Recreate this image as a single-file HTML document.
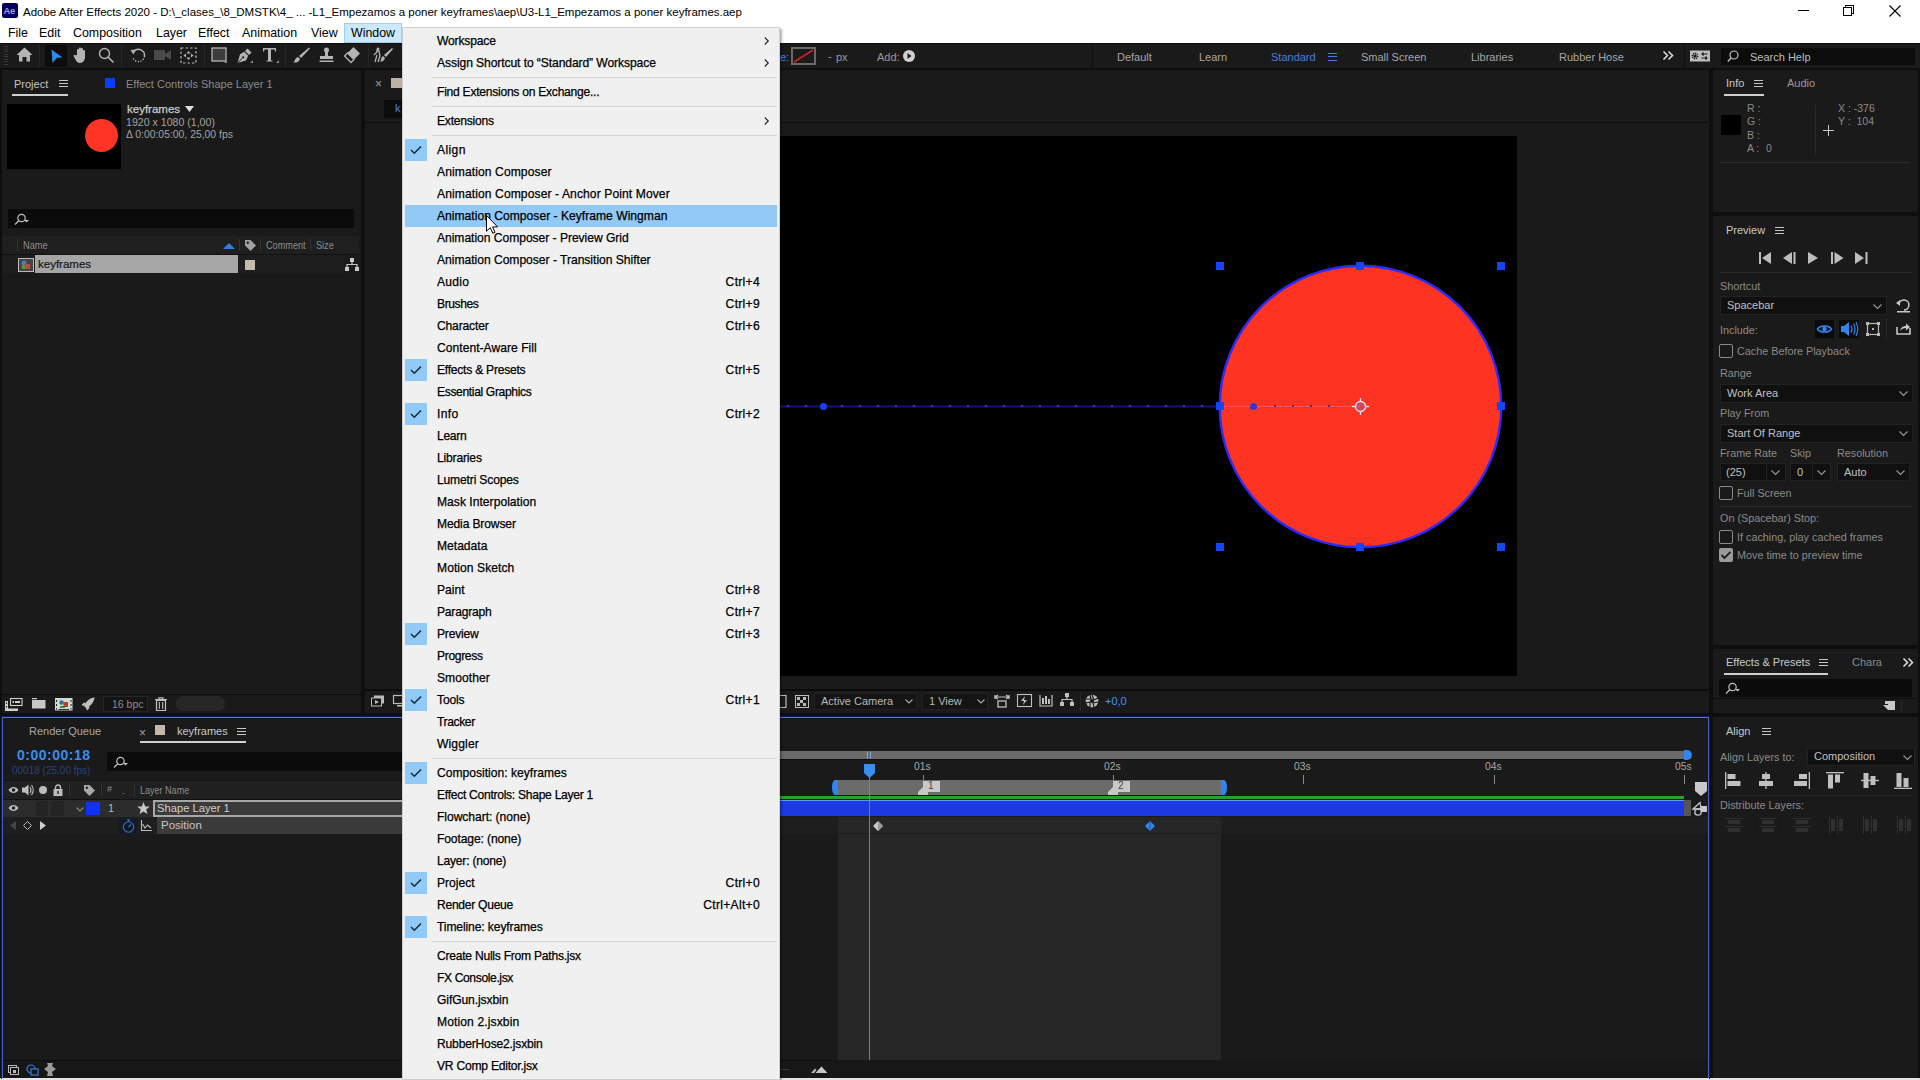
<!DOCTYPE html>
<html><head><meta charset="utf-8"><style>
*{margin:0;padding:0;box-sizing:border-box}
html,body{width:1920px;height:1080px;overflow:hidden;background:#0e0e0e;font-family:"Liberation Sans",sans-serif}
.a{position:absolute}
svg.a{overflow:visible}
.t{position:absolute;white-space:nowrap;line-height:1}
</style></head><body>
<div class="a" style="left:0px;top:0px;width:1920px;height:43px;background:#fff;"></div>
<div class="a" style="left:2px;top:3px;width:16px;height:15px;background:#00005b;border-radius:2px"></div>
<div class="t" style="left:3.5px;top:6px;font-size:9.5px;color:#9999ff;font-weight:bold;letter-spacing:-0.3px">Ae</div>
<div class="t" style="left:23px;top:7px;font-size:11.5px;color:#000;">Adobe After Effects 2020 - D:\_clases_\8_DMSTK\4_ ... -L1_Empezamos a poner keyframes\aep\U3-L1_Empezamos a poner keyframes.aep</div>
<div class="a" style="left:1798px;top:10px;width:11px;height:1px;background:#000;"></div>
<div class="a" style="left:1845px;top:5px;width:9px;height:9px;border:1px solid #000"></div>
<div class="a" style="left:1843px;top:7px;width:9px;height:9px;border:1px solid #000;background:#fff"></div>
<svg class="a" style="left:1889px;top:5px;" width="12" height="12" viewBox="0 0 12 12"><path d="M0.5 0.5L11.5 11.5M11.5 0.5L0.5 11.5" stroke="#000" stroke-width="1.1"/></svg>
<div class="a" style="left:344px;top:23px;width:58px;height:20px;background:#cce8ff;border:1px solid #99d1ff"></div>
<div class="t" style="left:8px;top:27px;font-size:12.4px;color:#000;">File</div>
<div class="t" style="left:39px;top:27px;font-size:12.4px;color:#000;">Edit</div>
<div class="t" style="left:73px;top:27px;font-size:12.4px;color:#000;">Composition</div>
<div class="t" style="left:156px;top:27px;font-size:12.4px;color:#000;">Layer</div>
<div class="t" style="left:198px;top:27px;font-size:12.4px;color:#000;">Effect</div>
<div class="t" style="left:242px;top:27px;font-size:12.4px;color:#000;">Animation</div>
<div class="t" style="left:311px;top:27px;font-size:12.4px;color:#000;">View</div>
<div class="t" style="left:351px;top:27px;font-size:12.4px;color:#000;">Window</div>
<div class="a" style="left:0px;top:43px;width:1920px;height:1035px;background:#0e0e0e;"></div>
<div class="a" style="left:0px;top:1078px;width:1920px;height:2px;background:#e6e6e6;"></div>
<div class="a" style="left:0px;top:44px;width:1920px;height:24px;background:#1a1a1a;"></div>
<div class="a" style="left:2px;top:70px;width:359px;height:643px;background:#1a1a1a;"></div>
<div class="a" style="left:365px;top:70px;width:1344px;height:643px;background:#1a1a1a;"></div>
<div class="a" style="left:1713px;top:70px;width:205px;height:142px;background:#1a1a1a;"></div>
<div class="a" style="left:1713px;top:216px;width:205px;height:429px;background:#1a1a1a;"></div>
<div class="a" style="left:1713px;top:649px;width:205px;height:64px;background:#1a1a1a;"></div>
<div class="a" style="left:1713px;top:717px;width:205px;height:361px;background:#1a1a1a;"></div>
<div class="a" style="left:2px;top:717px;width:1707px;height:361px;background:#1a1a1a;"></div>
<div class="a" style="left:4px;top:46.0px;width:4px;height:1px;background:#3a3a3a;"></div>
<div class="a" style="left:4px;top:48.5px;width:4px;height:1px;background:#3a3a3a;"></div>
<div class="a" style="left:4px;top:51.0px;width:4px;height:1px;background:#3a3a3a;"></div>
<div class="a" style="left:4px;top:53.5px;width:4px;height:1px;background:#3a3a3a;"></div>
<div class="a" style="left:4px;top:56.0px;width:4px;height:1px;background:#3a3a3a;"></div>
<div class="a" style="left:4px;top:58.5px;width:4px;height:1px;background:#3a3a3a;"></div>
<div class="a" style="left:4px;top:61.0px;width:4px;height:1px;background:#3a3a3a;"></div>
<div class="a" style="left:4px;top:63.5px;width:4px;height:1px;background:#3a3a3a;"></div>
<svg class="a" style="left:16px;top:47px;" width="17" height="15" viewBox="0 0 17 15"><path d="M8.5 0.5L16.5 8H14V14.5H10.5V10H6.5V14.5H3V8H0.5Z" fill="#b4b4b4"/></svg>
<div class="a" style="left:39px;top:45px;width:1px;height:22px;background:#262626;"></div>
<div class="a" style="left:45px;top:45px;width:22px;height:22px;background:#0c0c0c;"></div>
<svg class="a" style="left:51px;top:49px;" width="12" height="15" viewBox="0 0 12 15"><path d="M0.5 0.5L11.5 8.5L6 8.8L1.5 14Z" fill="#2d8ceb"/></svg>
<svg class="a" style="left:73px;top:47px;" width="16" height="17" viewBox="0 0 16 17"><path d="M4 8V3a1 1 0 0 1 2 0V7V1.5a1 1 0 0 1 2 0V7V2a1 1 0 0 1 2 0V7.5V4a1 1 0 0 1 2 0V10c0 3-2 6-5 6H6.5C5 16 4 15 3 13.5L0.8 9.5a1 1 0 0 1 1.6-1.2Z" fill="#b4b4b4"/></svg>
<svg class="a" style="left:98px;top:47px;" width="17" height="17" viewBox="0 0 17 17"><circle cx="6.5" cy="6.5" r="5" fill="none" stroke="#b4b4b4" stroke-width="1.4"/><path d="M10 10L15.5 15.5" stroke="#b4b4b4" stroke-width="1.6"/></svg>
<div class="a" style="left:121px;top:45px;width:1px;height:22px;background:#262626;"></div>
<svg class="a" style="left:130px;top:47px;" width="17" height="17" viewBox="0 0 17 17"><path d="M4 4.5A6 6 0 0 1 14.5 9" fill="none" stroke="#b4b4b4" stroke-width="1.5"/><path d="M14.5 9A6 6 0 0 1 3 11" fill="none" stroke="#b4b4b4" stroke-width="1.4" stroke-dasharray="1.3 1.5"/><path d="M0.5 3L6 2.5L3.5 7.5Z" fill="#b4b4b4"/></svg>
<svg class="a" style="left:154px;top:49px;" width="18" height="12" viewBox="0 0 18 12"><rect x="0" y="1" width="11" height="10" fill="#4a4a4a"/><path d="M11 5L17 1V11L11 7Z" fill="#4a4a4a"/></svg>
<svg class="a" style="left:180px;top:47px;" width="17" height="17" viewBox="0 0 17 17"><rect x="1" y="1" width="15" height="15" fill="none" stroke="#b4b4b4" stroke-width="1.2" stroke-dasharray="2.5 2"/><path d="M8.5 4L6.5 6.5H10.5Z M8.5 13L6.5 10.5H10.5Z M3.5 8.5L6 6.5V10.5Z M13.5 8.5L11 6.5V10.5Z" fill="#b4b4b4"/></svg>
<div class="a" style="left:204px;top:45px;width:1px;height:22px;background:#262626;"></div>
<svg class="a" style="left:211px;top:47px;" width="18" height="17" viewBox="0 0 18 17"><rect x="1" y="1" width="14" height="13" fill="#3c3c3c" stroke="#b4b4b4" stroke-width="1.3"/><path d="M16 16H13L16 13Z" fill="#888"/></svg>
<svg class="a" style="left:236px;top:47px;" width="18" height="17" viewBox="0 0 18 17"><path d="M11.5 1.5L15.5 5.5L13 8L9 4Z" fill="#b4b4b4"/><path d="M8.2 4.8L12.2 8.8L10 13.5L1.5 16L4 7.2Z" fill="#b4b4b4"/><path d="M1.8 15.7L6.5 11" stroke="#1a1a1a" stroke-width="1"/><circle cx="7.2" cy="10.3" r="1.1" fill="#1a1a1a"/><path d="M17 16H14L17 13Z" fill="#888"/></svg>
<svg class="a" style="left:262px;top:47px;" width="18" height="17" viewBox="0 0 18 17"><path d="M1 1H14V4.5H13L12.5 2.5H9V13.5H10.5V14.5H4.5V13.5H6V2.5H2.5L2 4.5H1Z" fill="#b4b4b4"/><path d="M17 16H14L17 13Z" fill="#888"/></svg>
<div class="a" style="left:285px;top:45px;width:1px;height:22px;background:#262626;"></div>
<svg class="a" style="left:293px;top:47px;" width="18" height="17" viewBox="0 0 18 17"><path d="M16 0.5L17 1.5L8 11L6 9Z" fill="#b4b4b4"/><path d="M5 10L7 12C6 15 3 16 0.5 15.5C2 14 2 11 5 10Z" fill="#b4b4b4"/></svg>
<svg class="a" style="left:318px;top:47px;" width="17" height="16" viewBox="0 0 17 16"><circle cx="8.5" cy="3" r="2.5" fill="#b4b4b4"/><path d="M7 5H10V9H15V12H2V9H7Z" fill="#b4b4b4"/><rect x="1.5" y="13.5" width="14" height="1.5" fill="#b4b4b4"/></svg>
<svg class="a" style="left:343px;top:46px;" width="18" height="17" viewBox="0 0 18 17"><path d="M10.5 1L17 7.5L11 13.5L4.5 7Z" fill="#b4b4b4"/><path d="M4.5 7L11 13.5L8 16.5L1.5 10Z" fill="none" stroke="#b4b4b4" stroke-width="1.3"/></svg>
<div class="a" style="left:368px;top:45px;width:1px;height:22px;background:#262626;"></div>
<svg class="a" style="left:373px;top:47px;" width="22" height="17" viewBox="0 0 22 17"><circle cx="5" cy="2" r="1.5" fill="#b4b4b4"/><path d="M3 4H6L7 9L5 15M4 8L2 15M4 5L1 8" fill="none" stroke="#b4b4b4" stroke-width="1.3"/><path d="M19 1L20 2L13 10L11 8Z" fill="#b4b4b4"/><path d="M10 9L12 11C11 14 9 15 7 14.5C8.5 13 8 10 10 9Z" fill="#b4b4b4"/></svg>
<div class="t" style="left:780px;top:52px;font-size:11px;color:#4a86e8;">e:</div>
<div class="a" style="left:791px;top:47px;width:25px;height:18px;background:#6a6a6a;"></div>
<div class="a" style="left:793px;top:49px;width:21px;height:14px;background:#1a1a1a;"></div>
<svg class="a" style="left:793px;top:49px;" width="21" height="14" viewBox="0 0 21 14"><path d="M1 13L20 1" stroke="#d42020" stroke-width="1.6"/></svg>
<div class="t" style="left:828px;top:51px;font-size:11px;color:#9a9a9a;">-</div>
<div class="t" style="left:836px;top:52px;font-size:11px;color:#9a9a9a;">px</div>
<div class="t" style="left:877px;top:52px;font-size:11px;color:#9a9a9a;">Add:</div>
<svg class="a" style="left:903px;top:50px;" width="12" height="12" viewBox="0 0 12 12"><circle cx="6" cy="6" r="6" fill="#d0d0d0"/><path d="M4.5 3L8.5 6L4.5 9Z" fill="#1b1b1b"/></svg>
<div class="a" style="left:1092px;top:44px;width:1px;height:24px;background:#111;"></div>
<div class="t" style="left:1117px;top:52px;font-size:11px;color:#a6a6a6;">Default</div>
<div class="t" style="left:1199px;top:52px;font-size:11px;color:#a6a6a6;">Learn</div>
<div class="t" style="left:1271px;top:52px;font-size:11px;color:#4a7cd6;">Standard</div>
<div class="a" style="left:1328px;top:52.5px;width:9px;height:1.3px;background:#4a7cd6;"></div>
<div class="a" style="left:1328px;top:56.0px;width:9px;height:1.3px;background:#4a7cd6;"></div>
<div class="a" style="left:1328px;top:59.5px;width:9px;height:1.3px;background:#4a7cd6;"></div>
<div class="t" style="left:1361px;top:52px;font-size:11px;color:#a6a6a6;">Small Screen</div>
<div class="t" style="left:1471px;top:52px;font-size:11px;color:#a6a6a6;">Libraries</div>
<div class="t" style="left:1559px;top:52px;font-size:11px;color:#a6a6a6;">Rubber Hose</div>
<svg class="a" style="left:1663px;top:51px;" width="11" height="9" viewBox="0 0 11 9"><path d="M0.5 0.5L4.5 4.5L0.5 8.5M5.5 0.5L9.5 4.5L5.5 8.5" fill="none" stroke="#d8d8d8" stroke-width="1.6"/></svg>
<div class="a" style="left:1684px;top:44px;width:1px;height:24px;background:#111;"></div>
<svg class="a" style="left:1690px;top:50px;" width="20" height="12" viewBox="0 0 20 12"><rect x="0" y="0.5" width="20" height="11" fill="#bdbdbd"/><circle cx="5" cy="6" r="2.6" fill="none" stroke="#1b1b1b" stroke-width="1.6" stroke-dasharray="1.2 0.8"/><circle cx="5" cy="6" r="1.6" fill="#1b1b1b"/><path d="M12 4H17.5M13.5 2.5L12 4L13.5 5.5M11.5 8H17M15.5 6.5L17 8L15.5 9.5" fill="none" stroke="#1b1b1b" stroke-width="1.2"/></svg>
<div class="a" style="left:1721px;top:48px;width:194px;height:17px;background:#0c0c0c;"></div>
<svg class="a" style="left:1727px;top:50px;" width="12" height="13" viewBox="0 0 12 13"><circle cx="7" cy="5" r="4" fill="none" stroke="#bdbdbd" stroke-width="1.2"/><path d="M4 8L0.8 11.5" stroke="#bdbdbd" stroke-width="1.4"/></svg>
<div class="t" style="left:1750px;top:52px;font-size:11px;color:#bdbdbd;">Search Help</div>
<div class="t" style="left:14px;top:79px;font-size:11px;color:#c4c4c4;">Project</div>
<div class="a" style="left:59px;top:79.5px;width:9px;height:1.2px;background:#c4c4c4;"></div>
<div class="a" style="left:59px;top:82.5px;width:9px;height:1.2px;background:#c4c4c4;"></div>
<div class="a" style="left:59px;top:85.5px;width:9px;height:1.2px;background:#c4c4c4;"></div>
<div class="a" style="left:12px;top:94px;width:56px;height:2px;background:#cfcfcf;"></div>
<div class="a" style="left:105px;top:78px;width:10px;height:10px;background:#0a3cff;"></div>
<div class="t" style="left:126px;top:79px;font-size:11px;color:#8a8a8a;">Effect Controls Shape Layer 1</div>
<div class="a" style="left:7px;top:104px;width:114px;height:65px;background:#000;"></div>
<div class="a" style="left:84.5px;top:119px;width:33px;height:33px;border-radius:50%;background:#ff3424"></div>
<div class="t" style="left:127px;top:104px;font-size:11.5px;color:#cccccc;-webkit-text-stroke:0.25px #cccccc">keyframes</div>
<svg class="a" style="left:185px;top:106px;" width="9" height="7" viewBox="0 0 9 7"><path d="M0 0H9L4.5 6Z" fill="#e0e0e0"/></svg>
<div class="t" style="left:126px;top:117px;font-size:10.6px;color:#a4a4a4;">1920 x 1080 (1,00)</div>
<div class="t" style="left:126px;top:130px;font-size:10.4px;color:#a4a4a4;">&Delta; 0:00:05:00, 25,00 fps</div>
<div class="a" style="left:8px;top:209px;width:346px;height:19px;background:#0b0b0b;"></div>
<svg class="a" style="left:14px;top:213px;" width="18" height="12" viewBox="0 0 18 12"><circle cx="7.5" cy="5" r="3.7" fill="none" stroke="#c0c0c0" stroke-width="1.2"/><path d="M5 7.5L1 11.5" stroke="#c0c0c0" stroke-width="1.3"/><path d="M10 7H15L12.5 9.5Z" fill="#c0c0c0"/></svg>
<div class="a" style="left:2px;top:236px;width:357px;height:18px;background:#1f1f1f;"></div>
<div class="a" style="left:2px;top:254px;width:357px;height:1px;background:#111;"></div>
<div class="a" style="left:17px;top:239px;width:1px;height:12px;background:#333;"></div>
<div class="a" style="left:239px;top:239px;width:1px;height:12px;background:#333;"></div>
<div class="a" style="left:260px;top:239px;width:1px;height:12px;background:#333;"></div>
<div class="a" style="left:310px;top:239px;width:1px;height:12px;background:#333;"></div>
<div class="t" style="left:23px;top:240px;font-size:10.5px;color:#8c8c8c;transform:scaleX(.88);transform-origin:0 0">Name</div>
<svg class="a" style="left:223px;top:243px;" width="12" height="6" viewBox="0 0 12 6"><path d="M0 6L6 0L12 6Z" fill="#2f7fe0"/></svg>
<svg class="a" style="left:244px;top:239px;" width="13" height="13" viewBox="0 0 13 13"><path d="M1 1H6.5L12 6.5L6.5 12L1 6.5Z" fill="#a0a0a0"/><circle cx="3.8" cy="3.8" r="1.2" fill="#1f1f1f"/></svg>
<div class="t" style="left:266px;top:240px;font-size:10.5px;color:#8c8c8c;transform:scaleX(.87);transform-origin:0 0">Comment</div>
<div class="t" style="left:316px;top:240px;font-size:10.5px;color:#8c8c8c;transform:scaleX(.87);transform-origin:0 0">Size</div>
<div class="a" style="left:2px;top:255px;width:342px;height:18px;background:#1e1e1e;"></div>
<svg class="a" style="left:18px;top:258px;" width="16" height="14" viewBox="0 0 16 14"><rect x="0.5" y="0.5" width="15" height="13" fill="#444" stroke="#bbb"/><circle cx="6" cy="5" r="2.5" fill="#4a7ec0"/><rect x="6" y="6" width="6" height="5" fill="#c04a3a"/><circle cx="5.5" cy="9" r="2" fill="#4aa04a"/></svg>
<div class="a" style="left:35px;top:255px;width:203px;height:18px;background:#a6a6a6;"></div>
<div class="t" style="left:38px;top:259px;font-size:11.5px;color:#161616;-webkit-text-stroke:0.2px #161616">keyframes</div>
<div class="a" style="left:245px;top:260px;width:10px;height:10px;background:#c5b9aa;"></div>
<svg class="a" style="left:345px;top:258px;" width="14" height="14" viewBox="0 0 14 14"><rect x="5" y="0" width="4" height="4" fill="#c8c8c8"/><rect x="0" y="9" width="4" height="4" fill="#c8c8c8"/><rect x="10" y="9" width="4" height="4" fill="#c8c8c8"/><path d="M7 4V6.5M2 9V6.5H12V9" fill="none" stroke="#c8c8c8" stroke-width="1.2"/></svg>
<div class="a" style="left:2px;top:694px;width:359px;height:1px;background:#0c0c0c;"></div>
<svg class="a" style="left:5px;top:698px;" width="18" height="13" viewBox="0 0 18 13"><rect x="0" y="3" width="3" height="10" fill="#cfcfcf"/><rect x="1" y="4.5" width="1" height="1.5" fill="#1a1a1a"/><rect x="1" y="8" width="1" height="1.5" fill="#1a1a1a"/><rect x="0" y="10.5" width="13" height="2.5" fill="#cfcfcf"/><rect x="5.5" y="0.5" width="11.5" height="7" fill="#1a1a1a" stroke="#cfcfcf" stroke-width="1.1"/><rect x="7.5" y="3" width="1.5" height="2" fill="#cfcfcf"/><rect x="10" y="3" width="5" height="2" fill="#cfcfcf"/></svg>
<svg class="a" style="left:32px;top:698px;" width="14" height="11" viewBox="0 0 14 11"><rect x="0" y="0" width="5" height="1.2" fill="#cfcfcf"/><rect x="0" y="2" width="13.5" height="8.5" fill="#c8c8c8"/></svg>
<svg class="a" style="left:55px;top:698px;" width="18" height="13" viewBox="0 0 18 13"><rect x="0" y="0" width="17.5" height="12.5" fill="#d6d6d6"/><rect x="3" y="1.5" width="11.5" height="8.5" fill="#cde0cd"/><circle cx="6.5" cy="4.5" r="2.3" fill="#3a6aa8"/><rect x="8.5" y="4" width="4.5" height="5" fill="#c0392b"/><rect x="5" y="8" width="5" height="2" fill="#3a8a3a"/><rect x="3.5" y="11" width="10.5" height="1" fill="#333"/><rect x="1" y="2" width="1" height="2" fill="#222"/><rect x="1" y="6" width="1" height="2" fill="#222"/><rect x="1" y="10" width="1" height="1.5" fill="#222"/><rect x="15.5" y="2" width="1" height="2" fill="#222"/><rect x="15.5" y="6" width="1" height="2" fill="#222"/><rect x="15.5" y="10" width="1" height="1.5" fill="#222"/></svg>
<svg class="a" style="left:81px;top:697px;" width="14" height="14" viewBox="0 0 14 14"><path d="M13.5 0.5C9 1 5 4 3 9L5 11C10 9 13 5 13.5 0.5Z" fill="#c0c0c0"/><path d="M3 9L0.5 8L3 5.5L5 6Z M5 11L6 13.5L8.5 11L8 9Z" fill="#c0c0c0"/></svg>
<div class="a" style="left:103px;top:696px;width:45px;height:16px;background:#141414;border:1px solid #262626"></div>
<div class="t" style="left:112px;top:699px;font-size:10.5px;color:#8c8c8c;">16 bpc</div>
<svg class="a" style="left:155px;top:697px;" width="12" height="14" viewBox="0 0 12 14"><path d="M0 2.5H12M4 2.5V0.8H8V2.5" fill="none" stroke="#c0c0c0" stroke-width="1.2"/><path d="M1.5 3.5H10.5V13.5H1.5Z" fill="none" stroke="#c0c0c0" stroke-width="1.2"/><path d="M4.3 5V12M7.7 5V12" stroke="#c0c0c0" stroke-width="1.1"/></svg>
<div class="a" style="left:176px;top:696px;width:49px;height:15px;background:#262626;border-radius:7px"></div>
<div class="t" style="left:375px;top:78px;font-size:12px;color:#a0a0a0;">&times;</div>
<div class="a" style="left:391px;top:78px;width:11px;height:10px;background:#bcb1a2;"></div>
<div class="a" style="left:384px;top:100px;width:20px;height:18px;background:#0c0c0c;"></div>
<div class="t" style="left:395px;top:103px;font-size:11px;color:#4d7fe8;">k</div>
<div class="a" style="left:365px;top:122px;width:1344px;height:1px;background:#0e0e0e;"></div>
<div class="a" style="left:557px;top:136px;width:960px;height:540px;background:#000;"></div>
<svg class="a" style="left:780px;top:0px;" width="600" height="420" viewBox="0 0 600 420"><path d="M0 406.5H580" stroke="#14147a" stroke-width="2"/><rect x="7" y="405" width="2" height="2" fill="#3a3aa0"/><rect x="25" y="405" width="2" height="2" fill="#3a3aa0"/><rect x="43" y="405" width="2" height="2" fill="#3a3aa0"/><rect x="61" y="405" width="2" height="2" fill="#3a3aa0"/><rect x="79" y="405" width="2" height="2" fill="#3a3aa0"/><rect x="97" y="405" width="2" height="2" fill="#3a3aa0"/><rect x="115" y="405" width="2" height="2" fill="#3a3aa0"/><rect x="133" y="405" width="2" height="2" fill="#3a3aa0"/><rect x="151" y="405" width="2" height="2" fill="#3a3aa0"/><rect x="169" y="405" width="2" height="2" fill="#3a3aa0"/><rect x="187" y="405" width="2" height="2" fill="#3a3aa0"/><rect x="205" y="405" width="2" height="2" fill="#3a3aa0"/><rect x="223" y="405" width="2" height="2" fill="#3a3aa0"/><rect x="241" y="405" width="2" height="2" fill="#3a3aa0"/><rect x="259" y="405" width="2" height="2" fill="#3a3aa0"/><rect x="277" y="405" width="2" height="2" fill="#3a3aa0"/><rect x="295" y="405" width="2" height="2" fill="#3a3aa0"/><rect x="313" y="405" width="2" height="2" fill="#3a3aa0"/><rect x="331" y="405" width="2" height="2" fill="#3a3aa0"/><rect x="349" y="405" width="2" height="2" fill="#3a3aa0"/><rect x="367" y="405" width="2" height="2" fill="#3a3aa0"/><rect x="385" y="405" width="2" height="2" fill="#3a3aa0"/><rect x="403" y="405" width="2" height="2" fill="#3a3aa0"/><rect x="421" y="405" width="2" height="2" fill="#3a3aa0"/><rect x="439" y="405" width="2" height="2" fill="#3a3aa0"/><rect x="457" y="405" width="2" height="2" fill="#3a3aa0"/><rect x="475" y="405" width="2" height="2" fill="#3a3aa0"/><rect x="493" y="405" width="2" height="2" fill="#3a3aa0"/><rect x="511" y="405" width="2" height="2" fill="#3a3aa0"/><rect x="529" y="405" width="2" height="2" fill="#3a3aa0"/><rect x="547" y="405" width="2" height="2" fill="#3a3aa0"/><rect x="565" y="405" width="2" height="2" fill="#3a3aa0"/></svg>
<svg class="a" style="left:1210px;top:256px;" width="302" height="302" viewBox="0 0 302 302"><circle cx="150.5" cy="150.5" r="140.8" fill="#ff3322" stroke="#2a2aff" stroke-width="2.4"/><path d="M10 150.5H150" stroke="#ff5a6a" stroke-width="1.2" opacity="0.8"/></svg>
<div class="a" style="left:820px;top:403px;width:7px;height:7px;border-radius:50%;background:#1f3dff"></div>
<div class="a" style="left:1250px;top:403px;width:7px;height:7px;border-radius:50%;background:#2a3ad8"></div>
<div class="a" style="left:1274px;top:405px;width:2px;height:2px;background:#3333aa;"></div>
<div class="a" style="left:1292px;top:405px;width:2px;height:2px;background:#3333aa;"></div>
<div class="a" style="left:1310px;top:405px;width:2px;height:2px;background:#3333aa;"></div>
<div class="a" style="left:1328px;top:405px;width:2px;height:2px;background:#3333aa;"></div>
<div class="a" style="left:1216px;top:262px;width:8px;height:8px;background:#1346ff;"></div>
<div class="a" style="left:1356px;top:262px;width:8px;height:8px;background:#1346ff;"></div>
<div class="a" style="left:1497px;top:262px;width:8px;height:8px;background:#1346ff;"></div>
<div class="a" style="left:1216px;top:402px;width:8px;height:8px;background:#1346ff;"></div>
<div class="a" style="left:1497px;top:402px;width:8px;height:8px;background:#1346ff;"></div>
<div class="a" style="left:1216px;top:543px;width:8px;height:8px;background:#1346ff;"></div>
<div class="a" style="left:1356px;top:543px;width:8px;height:8px;background:#1346ff;"></div>
<div class="a" style="left:1497px;top:543px;width:8px;height:8px;background:#1346ff;"></div>
<svg class="a" style="left:1350px;top:396px;" width="21" height="21" viewBox="0 0 21 21"><circle cx="10.5" cy="10.5" r="5" fill="none" stroke="#e0e0ff" stroke-width="1.3"/><circle cx="10.5" cy="10.5" r="2.5" fill="none" stroke="#7070c0" stroke-width="1"/><path d="M10.5 2V6M10.5 15V19M2 10.5H6M15 10.5H19" stroke="#e0e0ff" stroke-width="1.3"/></svg>
<div class="a" style="left:365px;top:689px;width:1344px;height:2px;background:#0c0c0c;"></div>
<svg class="a" style="left:371px;top:695px;" width="14" height="12" viewBox="0 0 14 12"><rect x="3" y="0.5" width="10" height="8" fill="#bbb"/><rect x="0.5" y="3" width="10" height="8" fill="#161616" stroke="#bbb"/><path d="M4 5L8 7L4 9Z" fill="#bbb"/></svg>
<svg class="a" style="left:393px;top:695px;" width="10" height="12" viewBox="0 0 10 12"><rect x="0.5" y="0.5" width="12" height="8" fill="none" stroke="#bbb" stroke-width="1.2"/><rect x="4" y="10" width="5" height="1.5" fill="#bbb"/></svg>
<svg class="a" style="left:780px;top:695px;" width="7" height="13" viewBox="0 0 7 13"><path d="M0 0.5H6V12.5H0" fill="none" stroke="#bbb" stroke-width="1.2"/></svg>
<svg class="a" style="left:795px;top:695px;" width="14" height="13" viewBox="0 0 14 13"><rect x="0.5" y="0.5" width="13" height="12" fill="none" stroke="#bbb"/><rect x="2" y="2" width="3" height="3" fill="#bbb"/><rect x="8" y="2" width="3" height="3" fill="#bbb"/><rect x="5" y="5" width="3" height="3" fill="#bbb"/><rect x="2" y="8" width="3" height="3" fill="#bbb"/><rect x="8" y="8" width="3" height="3" fill="#bbb"/></svg>
<div class="a" style="left:814px;top:693px;width:103px;height:17px;background:#141414;border:1px solid #222"></div>
<div class="t" style="left:821px;top:696px;font-size:11px;color:#b8b8b8;">Active Camera</div>
<svg class="a" style="left:905px;top:699px;" width="8" height="5" viewBox="0 0 8 5"><path d="M0.5 0.5L4 4L7.5 0.5" fill="none" stroke="#aaa" stroke-width="1.1"/></svg>
<div class="a" style="left:922px;top:693px;width:66px;height:17px;background:#141414;border:1px solid #222"></div>
<div class="t" style="left:929px;top:696px;font-size:11px;color:#b8b8b8;">1 View</div>
<svg class="a" style="left:977px;top:699px;" width="8" height="5" viewBox="0 0 8 5"><path d="M0.5 0.5L4 4L7.5 0.5" fill="none" stroke="#aaa" stroke-width="1.1"/></svg>
<svg class="a" style="left:994px;top:694px;" width="16" height="14" viewBox="0 0 16 14"><path d="M1 1V5M15 1V5M1 3H15M4 1L1 3L4 5M12 1L15 3L12 5" fill="none" stroke="#c0c0c0" stroke-width="1.2"/><rect x="4" y="7" width="8" height="6" fill="none" stroke="#c0c0c0" stroke-width="1.3"/></svg>
<svg class="a" style="left:1017px;top:694px;" width="15" height="14" viewBox="0 0 15 14"><rect x="0.5" y="0.5" width="14" height="12" fill="none" stroke="#c0c0c0" stroke-width="1.1"/><path d="M8 2L4 7H7L6 11L10 6H7Z" fill="#c0c0c0"/></svg>
<svg class="a" style="left:1039px;top:694px;" width="14" height="13" viewBox="0 0 14 13"><path d="M1 1V12H13V1" fill="none" stroke="#c0c0c0" stroke-width="1.2"/><rect x="3" y="4" width="2" height="6" fill="#c0c0c0"/><rect x="6" y="2" width="2" height="8" fill="#c0c0c0"/><rect x="9" y="5" width="2" height="5" fill="#c0c0c0"/></svg>
<svg class="a" style="left:1060px;top:693px;" width="14" height="14" viewBox="0 0 14 14"><rect x="5" y="0" width="4" height="4" fill="#c0c0c0"/><rect x="0" y="9" width="4" height="4" fill="#c0c0c0"/><rect x="10" y="9" width="4" height="4" fill="#c0c0c0"/><path d="M7 4V6.5M2 9V6.5H12V9" fill="none" stroke="#c0c0c0" stroke-width="1.2"/></svg>
<div class="a" style="left:1080px;top:692px;width:1px;height:19px;background:#262626;"></div>
<svg class="a" style="left:1085px;top:694px;" width="14" height="14" viewBox="0 0 14 14"><circle cx="7" cy="7" r="6.3" fill="#bdbdbd"/><path d="M7 1L9 6L13 4M13 8L8 9L9 13M5 13L5 8L1 9M1 5L6 5L5 1" fill="none" stroke="#161616" stroke-width="1.2"/><circle cx="7" cy="7" r="2" fill="#161616"/></svg>
<div class="t" style="left:1105px;top:696px;font-size:11px;color:#4d8de8;">+0,0</div>
<div class="t" style="left:1726px;top:78px;font-size:11px;color:#c8c8c8;">Info</div>
<div class="a" style="left:1754px;top:79.5px;width:9px;height:1.2px;background:#c4c4c4;"></div>
<div class="a" style="left:1754px;top:82.5px;width:9px;height:1.2px;background:#c4c4c4;"></div>
<div class="a" style="left:1754px;top:85.5px;width:9px;height:1.2px;background:#c4c4c4;"></div>
<div class="a" style="left:1724px;top:94px;width:40px;height:2px;background:#cfcfcf;"></div>
<div class="t" style="left:1787px;top:78px;font-size:11px;color:#9a9a9a;">Audio</div>
<div class="a" style="left:1721px;top:115px;width:20px;height:20px;background:#000;"></div>
<div class="t" style="left:1747px;top:103.0px;font-size:10.5px;color:#8a8a8a;">R :</div>
<div class="t" style="left:1747px;top:116.3px;font-size:10.5px;color:#8a8a8a;">G :</div>
<div class="t" style="left:1747px;top:129.6px;font-size:10.5px;color:#8a8a8a;">B :</div>
<div class="t" style="left:1747px;top:142.9px;font-size:10.5px;color:#8a8a8a;">A :</div>
<div class="t" style="left:1766px;top:143px;font-size:10.5px;color:#8a8a8a;">0</div>
<div class="a" style="left:1815px;top:105px;width:1px;height:50px;background:#2a2a2a;"></div>
<svg class="a" style="left:1823px;top:125px;" width="11" height="11" viewBox="0 0 11 11"><path d="M5.5 0V11M0 5.5H11" stroke="#c8c8c8" stroke-width="1"/></svg>
<div class="t" style="left:1838px;top:103px;font-size:10.5px;color:#8a8a8a;">X : -376</div>
<div class="t" style="left:1838px;top:116px;font-size:10.5px;color:#8a8a8a;">Y : &nbsp;104</div>
<div class="a" style="left:1720px;top:162px;width:190px;height:1px;background:#2a2a2a;"></div>
<div class="t" style="left:1726px;top:225px;font-size:11px;color:#c8c8c8;">Preview</div>
<div class="a" style="left:1775px;top:226.5px;width:9px;height:1.2px;background:#c4c4c4;"></div>
<div class="a" style="left:1775px;top:229.5px;width:9px;height:1.2px;background:#c4c4c4;"></div>
<div class="a" style="left:1775px;top:232.5px;width:9px;height:1.2px;background:#c4c4c4;"></div>
<svg class="a" style="left:1759px;top:252px;" width="13" height="12" viewBox="0 0 13 12"><rect x="0" y="0" width="2" height="12" fill="#bdbdbd"/><path d="M12 0V12L3 6Z" fill="#bdbdbd"/></svg>
<svg class="a" style="left:1783px;top:252px;" width="13" height="12" viewBox="0 0 13 12"><path d="M9 0V12L0 6Z" fill="#bdbdbd"/><rect x="10.5" y="0" width="2" height="12" fill="#bdbdbd"/></svg>
<svg class="a" style="left:1808px;top:252px;" width="11" height="12" viewBox="0 0 11 12"><path d="M0 0V12L10 6Z" fill="#bdbdbd"/></svg>
<svg class="a" style="left:1831px;top:252px;" width="13" height="12" viewBox="0 0 13 12"><rect x="0" y="0" width="2" height="12" fill="#bdbdbd"/><path d="M3.5 0V12L12.5 6Z" fill="#bdbdbd"/></svg>
<svg class="a" style="left:1855px;top:252px;" width="13" height="12" viewBox="0 0 13 12"><path d="M0 0V12L9 6Z" fill="#bdbdbd"/><rect x="10.5" y="0" width="2" height="12" fill="#bdbdbd"/></svg>
<div class="a" style="left:1720px;top:272px;width:192px;height:1px;background:#2a2a2a;"></div>
<div class="t" style="left:1720px;top:281px;font-size:10.8px;color:#8a8a8a;">Shortcut</div>
<div class="a" style="left:1720px;top:296px;width:167px;height:19px;background:#101010;border:1px solid #222"></div>
<div class="t" style="left:1727px;top:300px;font-size:11px;color:#c0c0c0;">Spacebar</div>
<svg class="a" style="left:1873px;top:304px;" width="9" height="5" viewBox="0 0 9 5"><path d="M0.5 0.5L4.5 4.5L8.5 0.5" fill="none" stroke="#999" stroke-width="1.1"/></svg>
<svg class="a" style="left:1896px;top:299px;" width="15" height="14" viewBox="0 0 15 14"><path d="M3 5A5 5 0 1 1 8 11" fill="none" stroke="#c8c8c8" stroke-width="1.5"/><path d="M0 4L4 1V7Z" fill="#c8c8c8"/><rect x="1" y="12" width="13" height="1.5" fill="#c8c8c8"/></svg>
<div class="t" style="left:1720px;top:325px;font-size:10.8px;color:#8a8a8a;">Include:</div>
<div class="a" style="left:1815px;top:320px;width:19px;height:18px;background:#0a0a0a;"></div>
<svg class="a" style="left:1817px;top:324px;" width="15" height="10" viewBox="0 0 15 10"><path d="M0.5 5C3 1 12 1 14.5 5C12 9 3 9 0.5 5Z" fill="none" stroke="#2f86f0" stroke-width="1.6"/><circle cx="7.5" cy="5" r="2.3" fill="#2f86f0"/></svg>
<div class="a" style="left:1839px;top:320px;width:20px;height:18px;background:#0a0a0a;"></div>
<svg class="a" style="left:1840px;top:322px;" width="19" height="14" viewBox="0 0 19 14"><path d="M1 4H4L9 0V14L4 10H1Z" fill="#2f86f0"/><path d="M11 3.5Q13 7 11 10.5M13.5 1.5Q16.5 7 13.5 12.5M16 0Q19.5 7 16 14" fill="none" stroke="#2f86f0" stroke-width="1.2"/></svg>
<svg class="a" style="left:1866px;top:322px;" width="14" height="14" viewBox="0 0 14 14"><rect x="1.5" y="1.5" width="11" height="11" fill="none" stroke="#bbb" stroke-width="1.2"/><rect x="0" y="0" width="3" height="3" fill="#bbb"/><rect x="11" y="0" width="3" height="3" fill="#bbb"/><rect x="0" y="11" width="3" height="3" fill="#bbb"/><rect x="11" y="11" width="3" height="3" fill="#bbb"/><rect x="6" y="6" width="2" height="2" fill="#bbb"/></svg>
<div class="a" style="left:1886px;top:319px;width:1px;height:20px;background:#2a2a2a;"></div>
<svg class="a" style="left:1896px;top:322px;" width="15" height="13" viewBox="0 0 15 13"><path d="M1 5V12H14V6" fill="none" stroke="#c8c8c8" stroke-width="1.6"/><path d="M4 9Q5 4 10 4V1.5L14 5L10 8.5V6Q6 6 4 9Z" fill="#c8c8c8"/></svg>
<div class="a" style="left:1719px;top:344px;width:14px;height:14px;background:transparent;border:1.5px solid #8a8a8a;border-radius:2px"></div>
<div class="t" style="left:1737px;top:346px;font-size:10.8px;color:#8a8a8a;">Cache Before Playback</div>
<div class="t" style="left:1720px;top:368px;font-size:10.8px;color:#8a8a8a;">Range</div>
<div class="a" style="left:1720px;top:384px;width:193px;height:19px;background:#101010;border:1px solid #222"></div>
<div class="t" style="left:1727px;top:388px;font-size:11px;color:#c0c0c0;">Work Area</div>
<svg class="a" style="left:1899px;top:391px;" width="9" height="5" viewBox="0 0 9 5"><path d="M0.5 0.5L4.5 4.5L8.5 0.5" fill="none" stroke="#999" stroke-width="1.1"/></svg>
<div class="t" style="left:1720px;top:408px;font-size:10.8px;color:#8a8a8a;">Play From</div>
<div class="a" style="left:1720px;top:424px;width:193px;height:19px;background:#101010;border:1px solid #222"></div>
<div class="t" style="left:1727px;top:428px;font-size:11px;color:#c0c0c0;">Start Of Range</div>
<svg class="a" style="left:1899px;top:431px;" width="9" height="5" viewBox="0 0 9 5"><path d="M0.5 0.5L4.5 4.5L8.5 0.5" fill="none" stroke="#999" stroke-width="1.1"/></svg>
<div class="t" style="left:1720px;top:448px;font-size:10.8px;color:#8a8a8a;">Frame Rate</div>
<div class="t" style="left:1790px;top:448px;font-size:10.8px;color:#8a8a8a;">Skip</div>
<div class="t" style="left:1837px;top:448px;font-size:10.8px;color:#8a8a8a;">Resolution</div>
<div class="a" style="left:1720px;top:463px;width:66px;height:18px;background:#101010;border:1px solid #222"></div>
<div class="a" style="left:1766px;top:463px;width:1px;height:18px;background:#222;"></div>
<div class="t" style="left:1726px;top:467px;font-size:11px;color:#c0c0c0;">(25)</div>
<svg class="a" style="left:1771px;top:470px;" width="9" height="5" viewBox="0 0 9 5"><path d="M0.5 0.5L4.5 4.5L8.5 0.5" fill="none" stroke="#999" stroke-width="1.1"/></svg>
<div class="a" style="left:1790px;top:463px;width:41px;height:18px;background:#101010;border:1px solid #222"></div>
<div class="a" style="left:1812px;top:463px;width:1px;height:18px;background:#222;"></div>
<div class="t" style="left:1797px;top:467px;font-size:11px;color:#c0c0c0;">0</div>
<svg class="a" style="left:1817px;top:470px;" width="9" height="5" viewBox="0 0 9 5"><path d="M0.5 0.5L4.5 4.5L8.5 0.5" fill="none" stroke="#999" stroke-width="1.1"/></svg>
<div class="a" style="left:1837px;top:463px;width:73px;height:18px;background:#101010;border:1px solid #222"></div>
<div class="t" style="left:1844px;top:467px;font-size:11px;color:#c0c0c0;">Auto</div>
<svg class="a" style="left:1896px;top:470px;" width="9" height="5" viewBox="0 0 9 5"><path d="M0.5 0.5L4.5 4.5L8.5 0.5" fill="none" stroke="#999" stroke-width="1.1"/></svg>
<div class="a" style="left:1719px;top:486px;width:14px;height:14px;background:transparent;border:1.5px solid #8a8a8a;border-radius:2px"></div>
<div class="t" style="left:1737px;top:488px;font-size:10.8px;color:#8a8a8a;">Full Screen</div>
<div class="a" style="left:1720px;top:506px;width:192px;height:1px;background:#2a2a2a;"></div>
<div class="t" style="left:1720px;top:513px;font-size:10.8px;color:#8a8a8a;">On (Spacebar) Stop:</div>
<div class="a" style="left:1719px;top:530px;width:14px;height:14px;background:transparent;border:1.5px solid #8a8a8a;border-radius:2px"></div>
<div class="t" style="left:1737px;top:532px;font-size:10.8px;color:#8a8a8a;">If caching, play cached frames</div>
<div class="a" style="left:1719px;top:548px;width:14px;height:14px;background:#9a9a9a;border-radius:2px"></div>
<svg class="a" style="left:1721px;top:551px;" width="10" height="8" viewBox="0 0 10 8"><path d="M0.5 4L3.5 7L9.5 0.8" fill="none" stroke="#1b1b1b" stroke-width="1.8"/></svg>
<div class="t" style="left:1737px;top:550px;font-size:10.8px;color:#8a8a8a;">Move time to preview time</div>
<div class="t" style="left:1726px;top:657px;font-size:11px;color:#c8c8c8;">Effects &amp; Presets</div>
<div class="a" style="left:1819px;top:658.5px;width:9px;height:1.2px;background:#c4c4c4;"></div>
<div class="a" style="left:1819px;top:661.5px;width:9px;height:1.2px;background:#c4c4c4;"></div>
<div class="a" style="left:1819px;top:664.5px;width:9px;height:1.2px;background:#c4c4c4;"></div>
<div class="a" style="left:1724px;top:673px;width:104px;height:2px;background:#cfcfcf;"></div>
<div class="t" style="left:1852px;top:657px;font-size:11px;color:#8a8a8a;">Chara</div>
<svg class="a" style="left:1903px;top:658px;" width="11" height="9" viewBox="0 0 11 9"><path d="M0.5 0.5L4.5 4.5L0.5 8.5M5.5 0.5L9.5 4.5L5.5 8.5" fill="none" stroke="#d8d8d8" stroke-width="1.6"/></svg>
<div class="a" style="left:1719px;top:679px;width:193px;height:18px;background:#0b0b0b;border-radius:2px"></div>
<svg class="a" style="left:1725px;top:682px;" width="18" height="12" viewBox="0 0 18 12"><circle cx="7.5" cy="5" r="3.7" fill="none" stroke="#c0c0c0" stroke-width="1.2"/><path d="M5 7.5L1 11.5" stroke="#c0c0c0" stroke-width="1.3"/><path d="M10 7H15L12.5 9.5Z" fill="#c0c0c0"/></svg>
<div class="a" style="left:1713px;top:698px;width:205px;height:1px;background:#0c0c0c;"></div>
<svg class="a" style="left:1882px;top:701px;" width="13" height="9" viewBox="0 0 13 9"><path d="M3 0H13V9H3Z" fill="#c8c8c8"/><path d="M0 3H6V9H0Z" fill="#161616"/><path d="M1 4H6V9Z" fill="#c8c8c8"/></svg>
<div class="a" style="left:1901px;top:699px;width:1px;height:13px;background:#262626;"></div>
<div class="t" style="left:1726px;top:726px;font-size:11px;color:#c8c8c8;">Align</div>
<div class="a" style="left:1762px;top:727.5px;width:9px;height:1.2px;background:#c4c4c4;"></div>
<div class="a" style="left:1762px;top:730.5px;width:9px;height:1.2px;background:#c4c4c4;"></div>
<div class="a" style="left:1762px;top:733.5px;width:9px;height:1.2px;background:#c4c4c4;"></div>
<div class="t" style="left:1720px;top:752px;font-size:10.8px;color:#8a8a8a;">Align Layers to:</div>
<div class="a" style="left:1807px;top:748px;width:108px;height:18px;background:#101010;border:1px solid #222"></div>
<div class="t" style="left:1814px;top:751px;font-size:11px;color:#c0c0c0;">Composition</div>
<svg class="a" style="left:1903px;top:755px;" width="9" height="5" viewBox="0 0 9 5"><path d="M0.5 0.5L4.5 4.5L8.5 0.5" fill="none" stroke="#999" stroke-width="1.1"/></svg>
<svg class="a" style="left:1725px;top:772px;" width="16" height="17" viewBox="0 0 16 17"><rect x="0" y="0" width="1.3" height="17" fill="#c0c0c0"/><rect x="2.5" y="2" width="8" height="5" fill="#c0c0c0"/><rect x="2.5" y="9" width="13" height="5" fill="#c0c0c0"/></svg>
<svg class="a" style="left:1759px;top:772px;" width="14" height="17" viewBox="0 0 14 17"><rect x="6.3" y="0" width="1.3" height="17" fill="#c0c0c0"/><rect x="3" y="2" width="8" height="5" fill="#c0c0c0"/><rect x="0" y="9" width="14" height="5" fill="#c0c0c0"/></svg>
<svg class="a" style="left:1794px;top:772px;" width="16" height="17" viewBox="0 0 16 17"><rect x="14.7" y="0" width="1.3" height="17" fill="#c0c0c0"/><rect x="5" y="2" width="8" height="5" fill="#c0c0c0"/><rect x="0" y="9" width="13" height="5" fill="#c0c0c0"/></svg>
<svg class="a" style="left:1826px;top:772px;" width="18" height="17" viewBox="0 0 18 17"><rect x="0" y="0" width="18" height="1.3" fill="#c0c0c0"/><rect x="2" y="2.5" width="5" height="14" fill="#c0c0c0"/><rect x="9" y="2.5" width="5" height="8" fill="#c0c0c0"/></svg>
<svg class="a" style="left:1861px;top:772px;" width="18" height="17" viewBox="0 0 18 17"><rect x="0" y="7.8" width="18" height="1.3" fill="#c0c0c0"/><rect x="2.5" y="1" width="5" height="15" fill="#c0c0c0"/><rect x="9.5" y="4" width="5" height="9" fill="#c0c0c0"/></svg>
<svg class="a" style="left:1894px;top:772px;" width="18" height="17" viewBox="0 0 18 17"><rect x="0" y="15.7" width="18" height="1.3" fill="#c0c0c0"/><rect x="2.5" y="1" width="5" height="14" fill="#c0c0c0"/><rect x="9.5" y="6" width="5" height="9" fill="#c0c0c0"/></svg>
<div class="a" style="left:1720px;top:795px;width:192px;height:1px;background:#2a2a2a;"></div>
<div class="t" style="left:1720px;top:800px;font-size:10.8px;color:#8a8a8a;">Distribute Layers:</div>
<svg class="a" style="left:1725px;top:816px;" width="18" height="17" viewBox="0 0 18 17"><rect x="0" y="2" width="18" height="1" fill="#303030"/><rect x="3" y="4" width="12" height="4" fill="#303030"/><rect x="0" y="10" width="18" height="1" fill="#303030"/><rect x="3" y="12" width="12" height="4" fill="#303030"/></svg>
<svg class="a" style="left:1759px;top:816px;" width="18" height="17" viewBox="0 0 18 17"><rect x="0" y="2" width="18" height="1" fill="#303030"/><rect x="3" y="4" width="12" height="4" fill="#303030"/><rect x="0" y="10" width="18" height="1" fill="#303030"/><rect x="3" y="12" width="12" height="4" fill="#303030"/></svg>
<svg class="a" style="left:1793px;top:816px;" width="18" height="17" viewBox="0 0 18 17"><rect x="0" y="2" width="18" height="1" fill="#303030"/><rect x="3" y="4" width="12" height="4" fill="#303030"/><rect x="0" y="10" width="18" height="1" fill="#303030"/><rect x="3" y="12" width="12" height="4" fill="#303030"/></svg>
<svg class="a" style="left:1827px;top:816px;" width="17" height="18" viewBox="0 0 17 18"><rect x="2" y="0" width="1" height="18" fill="#303030"/><rect x="4" y="3" width="4" height="12" fill="#303030"/><rect x="10" y="0" width="1" height="18" fill="#303030"/><rect x="12" y="3" width="4" height="12" fill="#303030"/></svg>
<svg class="a" style="left:1861px;top:816px;" width="17" height="18" viewBox="0 0 17 18"><rect x="2" y="0" width="1" height="18" fill="#303030"/><rect x="4" y="3" width="4" height="12" fill="#303030"/><rect x="10" y="0" width="1" height="18" fill="#303030"/><rect x="12" y="3" width="4" height="12" fill="#303030"/></svg>
<svg class="a" style="left:1895px;top:816px;" width="17" height="18" viewBox="0 0 17 18"><rect x="2" y="0" width="1" height="18" fill="#303030"/><rect x="4" y="3" width="4" height="12" fill="#303030"/><rect x="10" y="0" width="1" height="18" fill="#303030"/><rect x="12" y="3" width="4" height="12" fill="#303030"/></svg>
<div class="a" style="left:1px;top:716px;width:1709px;height:1px;background:#0a1a6a;"></div>
<div class="a" style="left:1px;top:717px;width:1709px;height:1px;background:#4f74d6;"></div>
<div class="a" style="left:1px;top:716px;width:1px;height:363px;background:#0a1a6a;"></div>
<div class="a" style="left:2px;top:717px;width:1px;height:361px;background:#4462c4;"></div>
<div class="a" style="left:1708px;top:717px;width:1px;height:361px;background:#4462c4;"></div>
<div class="a" style="left:1709px;top:716px;width:1px;height:363px;background:#0a1a6a;"></div>
<div class="t" style="left:29px;top:726px;font-size:11px;color:#a8a8a8;">Render Queue</div>
<div class="t" style="left:139px;top:727px;font-size:12px;color:#a0a0a0;">&times;</div>
<div class="a" style="left:155px;top:725px;width:10px;height:10px;background:#c5b9aa;"></div>
<div class="t" style="left:177px;top:726px;font-size:11px;color:#c8c8c8;">keyframes</div>
<div class="a" style="left:237px;top:727.5px;width:9px;height:1.2px;background:#c8c8c8;"></div>
<div class="a" style="left:237px;top:730.5px;width:9px;height:1.2px;background:#c8c8c8;"></div>
<div class="a" style="left:237px;top:733.5px;width:9px;height:1.2px;background:#c8c8c8;"></div>
<div class="a" style="left:140px;top:741px;width:106px;height:2px;background:#cfcfcf;"></div>
<div class="t" style="left:17px;top:748px;font-size:14px;color:#3a8ef0;font-weight:bold;letter-spacing:0.5px">0:00:00:18</div>
<div class="t" style="left:12px;top:766px;font-size:10px;color:#27437a;">00018 (25.00 fps)</div>
<div class="a" style="left:107px;top:752px;width:400px;height:19px;background:#0b0b0b;border-radius:2px"></div>
<svg class="a" style="left:113px;top:756px;" width="18" height="12" viewBox="0 0 18 12"><circle cx="7.5" cy="5" r="3.7" fill="none" stroke="#c0c0c0" stroke-width="1.2"/><path d="M5 7.5L1 11.5" stroke="#c0c0c0" stroke-width="1.3"/><path d="M10 7H15L12.5 9.5Z" fill="#c0c0c0"/></svg>
<div class="a" style="left:3px;top:781px;width:400px;height:18px;background:#202020;"></div>
<div class="a" style="left:3px;top:780px;width:400px;height:1px;background:#111;"></div>
<div class="a" style="left:3px;top:799px;width:400px;height:1px;background:#111;"></div>
<svg class="a" style="left:8px;top:786px;" width="11" height="8" viewBox="0 0 11 8"><path d="M0.5 4C3 0 8 0 10.5 4C8 8 3 8 0.5 4Z" fill="#bdbdbd"/><circle cx="5.5" cy="4" r="1.8" fill="#202020"/></svg>
<svg class="a" style="left:22px;top:784px;" width="12" height="12" viewBox="0 0 12 12"><path d="M0 3.5H3L6.5 0.5V11.5L3 8.5H0Z" fill="#bdbdbd"/><path d="M8 3Q10 6 8 9M9.5 1Q13 6 9.5 11" fill="none" stroke="#bdbdbd" stroke-width="1.1"/></svg>
<div class="a" style="left:39px;top:786px;width:8px;height:8px;border-radius:50%;background:#bdbdbd"></div>
<svg class="a" style="left:53px;top:784px;" width="10" height="12" viewBox="0 0 10 12"><path d="M2.5 5V3.5A2.5 2.5 0 0 1 7.5 3.5V5" fill="none" stroke="#bdbdbd" stroke-width="1.4"/><rect x="0.5" y="5" width="9" height="7" fill="#bdbdbd"/><rect x="4.3" y="7" width="1.4" height="3" fill="#202020"/></svg>
<div class="a" style="left:69px;top:784px;width:1px;height:12px;background:#333;"></div>
<svg class="a" style="left:83px;top:784px;" width="13" height="13" viewBox="0 0 13 13"><path d="M1 1H6.5L12 6.5L6.5 12L1 6.5Z" fill="#a8a8a8"/><circle cx="3.8" cy="3.8" r="1.2" fill="#202020"/></svg>
<div class="a" style="left:101px;top:784px;width:1px;height:12px;background:#333;"></div>
<div class="t" style="left:107px;top:785px;font-size:9px;color:#8c8c8c;">#</div>
<div class="t" style="left:122px;top:787px;font-size:9px;color:#8c8c8c;">.</div>
<div class="a" style="left:134px;top:784px;width:1px;height:12px;background:#333;"></div>
<div class="t" style="left:140px;top:785px;font-size:10.5px;color:#8c8c8c;transform:scaleX(.86);transform-origin:0 0">Layer Name</div>
<div class="a" style="left:3px;top:800px;width:400px;height:17px;background:#2c2c2c;"></div>
<svg class="a" style="left:8px;top:804px;" width="11" height="8" viewBox="0 0 11 8"><path d="M0.5 4C3 0 8 0 10.5 4C8 8 3 8 0.5 4Z" fill="#bdbdbd"/><circle cx="5.5" cy="4" r="1.8" fill="#2c2c2c"/></svg>
<div class="a" style="left:36px;top:801px;width:12px;height:15px;background:#242424;"></div>
<div class="a" style="left:51px;top:801px;width:13px;height:15px;background:#242424;"></div>
<svg class="a" style="left:76px;top:807px;" width="8" height="5" viewBox="0 0 8 5"><path d="M0.5 0.5L4 4L7.5 0.5" fill="none" stroke="#888" stroke-width="1.1"/></svg>
<div class="a" style="left:86px;top:802px;width:14px;height:13px;background:#1030ff;"></div>
<div class="t" style="left:108px;top:803px;font-size:11px;color:#b8b8b8;">1</div>
<svg class="a" style="left:137px;top:802px;" width="13" height="12" viewBox="0 0 13 12"><path d="M6.5 0L8.2 4.4L12.8 4.6L9.2 7.5L10.5 12L6.5 9.4L2.5 12L3.8 7.5L0.2 4.6L4.8 4.4Z" fill="#c8c8c8"/></svg>
<div class="a" style="left:153px;top:800px;width:260px;height:17px;background:#3a3a3a;border:2px solid #a8a8a8"></div>
<div class="t" style="left:157px;top:803px;font-size:11.2px;color:#cfcfcf;">Shape Layer 1</div>
<div class="a" style="left:3px;top:817px;width:400px;height:17px;background:#1e1e1e;"></div>
<svg class="a" style="left:10px;top:821px;" width="6" height="9" viewBox="0 0 6 9"><path d="M6 0V9L0 4.5Z" fill="#444"/></svg>
<svg class="a" style="left:23px;top:821px;" width="9" height="9" viewBox="0 0 9 9"><path d="M4.5 0.5L8.5 4.5L4.5 8.5L0.5 4.5Z" fill="none" stroke="#bbb" stroke-width="1"/></svg>
<svg class="a" style="left:40px;top:821px;" width="6" height="9" viewBox="0 0 6 9"><path d="M0 0V9L6 4.5Z" fill="#d0d0d0"/></svg>
<div class="a" style="left:119px;top:818px;width:18px;height:16px;background:#141a26;"></div>
<svg class="a" style="left:122px;top:819px;" width="13" height="14" viewBox="0 0 13 14"><circle cx="6.5" cy="8" r="5.2" fill="none" stroke="#3a6fc4" stroke-width="1.1"/><path d="M5 0.8H8M6.5 1V2.5M6.5 8L9 5.5" fill="none" stroke="#3a6fc4" stroke-width="1.1"/></svg>
<svg class="a" style="left:141px;top:820px;" width="11" height="11" viewBox="0 0 11 11"><path d="M0.5 0V10.5H11" fill="none" stroke="#bbb" stroke-width="1.1"/><path d="M1.5 4L4 8L6.5 5L10 8" fill="none" stroke="#bbb" stroke-width="1.1"/></svg>
<div class="a" style="left:157px;top:817px;width:250px;height:17px;background:#3a3a3a;"></div>
<div class="t" style="left:161px;top:820px;font-size:11.5px;color:#c4c4c4;">Position</div>
<div class="a" style="left:3px;top:1060px;width:829px;height:1px;background:#0c0c0c;"></div>
<div class="a" style="left:3px;top:1061px;width:1705px;height:17px;background:#171717;"></div>
<svg class="a" style="left:8px;top:1065px;" width="12" height="11" viewBox="0 0 12 11"><rect x="0.5" y="0.5" width="8" height="7" fill="none" stroke="#bbb"/><rect x="2.5" y="2.5" width="8" height="7" fill="#161616" stroke="#bbb"/><rect x="5" y="5" width="3" height="3" fill="#bbb"/></svg>
<svg class="a" style="left:26px;top:1064px;" width="13" height="12" viewBox="0 0 13 12"><circle cx="5" cy="5" r="4" fill="none" stroke="#2f7fe0" stroke-width="1.2"/><rect x="5" y="5" width="7" height="6" fill="#161616" stroke="#2f7fe0" stroke-width="1.2"/></svg>
<svg class="a" style="left:44px;top:1063px;" width="12" height="13" viewBox="0 0 12 13"><path d="M3 0H9L8 3L12 6L8 9L9 13H3L4 9L0 6L4 3Z" fill="#9a9a9a"/></svg>
<div class="a" style="left:780px;top:751px;width:905px;height:8px;background:#6b6b6b;"></div>
<div class="a" style="left:780px;top:759px;width:905px;height:1px;background:#0c0c0c;"></div>
<svg class="a" style="left:1683px;top:750px;" width="9" height="10" viewBox="0 0 9 10"><path d="M1 0H4A5 5 0 0 1 4 10H1Z" fill="#2f86f0"/></svg>
<svg class="a" style="left:866px;top:751px;" width="6" height="8" viewBox="0 0 6 8"><path d="M1.5 0.5V7.5M4.5 0.5V7.5" stroke="#6fa8f0" stroke-width="1"/></svg>
<div class="t" style="left:914px;top:762px;font-size:10.3px;color:#a8a8a8;">01s</div>
<div class="t" style="left:1104px;top:762px;font-size:10.3px;color:#a8a8a8;">02s</div>
<div class="t" style="left:1294px;top:762px;font-size:10.3px;color:#a8a8a8;">03s</div>
<div class="t" style="left:1485px;top:762px;font-size:10.3px;color:#a8a8a8;">04s</div>
<div class="t" style="left:1675px;top:762px;font-size:10.3px;color:#a8a8a8;">05s</div>
<div class="a" style="left:923px;top:775px;width:1px;height:9px;background:#888;"></div>
<div class="a" style="left:1113px;top:775px;width:1px;height:9px;background:#888;"></div>
<div class="a" style="left:1303px;top:775px;width:1px;height:9px;background:#888;"></div>
<div class="a" style="left:1494px;top:775px;width:1px;height:9px;background:#888;"></div>
<div class="a" style="left:1684px;top:775px;width:1px;height:9px;background:#888;"></div>
<div class="a" style="left:838px;top:780px;width:384px;height:15px;background:#6b6b6b;"></div>
<svg class="a" style="left:832px;top:780px;" width="7" height="15" viewBox="0 0 7 15"><path d="M6 0V15H3A3 7.5 0 0 1 3 0Z" fill="#2f86f0"/></svg>
<svg class="a" style="left:1221px;top:780px;" width="7" height="15" viewBox="0 0 7 15"><path d="M0 0V15H3A3 7.5 0 0 0 3 0Z" fill="#2f86f0"/></svg>
<div class="a" style="left:923px;top:781px;width:17px;height:11px;background:#c8c8c8;"></div>
<div class="t" style="left:928px;top:781px;font-size:10px;color:#444;">1</div>
<svg class="a" style="left:918px;top:787px;" width="10" height="8" viewBox="0 0 10 8"><path d="M5 0L10 5V8H0V5Z" fill="#c8c8c8"/></svg>
<div class="a" style="left:1113px;top:781px;width:17px;height:11px;background:#c8c8c8;"></div>
<div class="t" style="left:1118px;top:781px;font-size:10px;color:#444;">2</div>
<svg class="a" style="left:1108px;top:787px;" width="10" height="8" viewBox="0 0 10 8"><path d="M5 0L10 5V8H0V5Z" fill="#c8c8c8"/></svg>
<svg class="a" style="left:1695px;top:782px;" width="12" height="14" viewBox="0 0 12 14"><path d="M0 0H12V9L6 14L0 9Z" fill="#c8c8c8"/></svg>
<div class="a" style="left:780px;top:796px;width:904px;height:3px;background:#1fa52a;"></div>
<div class="a" style="left:780px;top:800px;width:904px;height:16px;background:#1b3ae0;"></div>
<div class="a" style="left:780px;top:800px;width:904px;height:1px;background:#5f9cf0;"></div>
<div class="a" style="left:1684px;top:800px;width:7px;height:16px;background:#555;"></div>
<svg class="a" style="left:1692px;top:802px;" width="15" height="14" viewBox="0 0 15 14"><path d="M1 7L8 0.5L9 7Z" fill="none" stroke="#c8c8c8" stroke-width="1.3"/><circle cx="6" cy="10" r="3.2" fill="none" stroke="#c8c8c8" stroke-width="1.3"/><rect x="9" y="4" width="6" height="6" fill="#c8c8c8"/></svg>
<div class="a" style="left:780px;top:817px;width:928px;height:17px;background:#1e1e1e;"></div>
<div class="a" style="left:838px;top:817px;width:383px;height:243px;background:#262626;"></div>
<div class="a" style="left:838px;top:833px;width:383px;height:1px;background:#1e1e1e;"></div>
<svg class="a" style="left:873px;top:821px;" width="10" height="10" viewBox="0 0 10 10"><path d="M5 0L10 5L5 10L0 5Z" fill="#c8c8c8"/><path d="M5 0L10 5L5 10Z" fill="#9a9a9a"/></svg>
<svg class="a" style="left:1145px;top:821px;" width="10" height="10" viewBox="0 0 10 10"><path d="M5 0L10 5L5 10L0 5Z" fill="#2f86f0"/><path d="M5 0V10" stroke="#1a4fb0" stroke-width="1"/></svg>
<svg class="a" style="left:864px;top:764px;" width="11" height="14" viewBox="0 0 11 14"><path d="M0 0H11V9L5.5 14L0 9Z" fill="#3a8ef0"/></svg>
<div class="a" style="left:869px;top:777px;width:1px;height:283px;background:#3a8ef0;"></div>
<div class="a" style="left:780px;top:1069px;width:9px;height:1px;background:#3a3a3a;"></div>
<svg class="a" style="left:811px;top:1066px;" width="17" height="7" viewBox="0 0 17 7"><path d="M0 7L4 2.5L5.5 4L3 7Z" fill="#b8b8b8"/><path d="M4.5 7L10.5 0.5L16.5 7Z" fill="#c8c8c8"/></svg>
<div class="a" style="left:402px;top:27px;width:378px;height:1053px;background:#f0f0f0;border:1px solid #cfcfcf;box-shadow:2px 2px 2px rgba(0,0,0,.3)"></div>
<div class="t" style="left:437px;top:35px;font-size:12.1px;color:#000;-webkit-text-stroke:0.25px #000;letter-spacing:-0.165px"><span class=mi>Workspace</span></div>
<svg class="a" style="left:764px;top:37px;" width="5" height="8" viewBox="0 0 5 8"><path d="M0.8 0.5L4.3 4L0.8 7.5" fill="none" stroke="#222" stroke-width="1.1"/></svg>
<div class="t" style="left:437px;top:57px;font-size:12.1px;color:#000;-webkit-text-stroke:0.25px #000;letter-spacing:-0.089px"><span class=mi>Assign Shortcut to &ldquo;Standard&rdquo; Workspace</span></div>
<svg class="a" style="left:764px;top:59px;" width="5" height="8" viewBox="0 0 5 8"><path d="M0.8 0.5L4.3 4L0.8 7.5" fill="none" stroke="#222" stroke-width="1.1"/></svg>
<div class="a" style="left:432px;top:77px;width:345px;height:1px;background:#d5d5d5;"></div>
<div class="t" style="left:437px;top:86px;font-size:12.1px;color:#000;-webkit-text-stroke:0.25px #000;letter-spacing:-0.26px"><span class=mi>Find Extensions on Exchange...</span></div>
<div class="a" style="left:432px;top:106px;width:345px;height:1px;background:#d5d5d5;"></div>
<div class="t" style="left:437px;top:115px;font-size:12.1px;color:#000;-webkit-text-stroke:0.25px #000;letter-spacing:-0.237px"><span class=mi>Extensions</span></div>
<svg class="a" style="left:764px;top:117px;" width="5" height="8" viewBox="0 0 5 8"><path d="M0.8 0.5L4.3 4L0.8 7.5" fill="none" stroke="#222" stroke-width="1.1"/></svg>
<div class="a" style="left:432px;top:135px;width:345px;height:1px;background:#d5d5d5;"></div>
<div class="a" style="left:405px;top:139px;width:22px;height:22px;background:#91c9f7;"></div>
<svg class="a" style="left:410px;top:145px;" width="12" height="10" viewBox="0 0 12 10"><path d="M1 5L4.3 8.3L11 1.5" fill="none" stroke="#1a2a3a" stroke-width="1.5"/></svg>
<div class="t" style="left:437px;top:144px;font-size:12.1px;color:#000;-webkit-text-stroke:0.25px #000;letter-spacing:0.379px"><span class=mi>Align</span></div>
<div class="t" style="left:437px;top:166px;font-size:12.1px;color:#000;-webkit-text-stroke:0.25px #000;letter-spacing:0.092px"><span class=mi>Animation Composer</span></div>
<div class="t" style="left:437px;top:188px;font-size:12.1px;color:#000;-webkit-text-stroke:0.25px #000;letter-spacing:0.092px"><span class=mi>Animation Composer - Anchor Point Mover</span></div>
<div class="a" style="left:405px;top:205px;width:372px;height:22px;background:#91c9f7;"></div>
<div class="t" style="left:437px;top:210px;font-size:12.1px;color:#000;-webkit-text-stroke:0.25px #000;letter-spacing:0.014px"><span class=mi>Animation Composer - Keyframe Wingman</span></div>
<div class="t" style="left:437px;top:232px;font-size:12.1px;color:#000;-webkit-text-stroke:0.25px #000;letter-spacing:-0.037px"><span class=mi>Animation Composer - Preview Grid</span></div>
<div class="t" style="left:437px;top:254px;font-size:12.1px;color:#000;-webkit-text-stroke:0.25px #000;letter-spacing:-0.021px"><span class=mi>Animation Composer - Transition Shifter</span></div>
<div class="t" style="left:437px;top:276px;font-size:12.1px;color:#000;-webkit-text-stroke:0.25px #000;letter-spacing:0.272px"><span class=mi>Audio</span></div>
<div class="t" style="right:1160px;top:276px;font-size:12.1px;color:#000;-webkit-text-stroke:0.25px #000;letter-spacing:0.3px">Ctrl+4</div>
<div class="t" style="left:437px;top:298px;font-size:12.1px;color:#000;-webkit-text-stroke:0.25px #000;letter-spacing:-0.411px"><span class=mi>Brushes</span></div>
<div class="t" style="right:1160px;top:298px;font-size:12.1px;color:#000;-webkit-text-stroke:0.25px #000;letter-spacing:0.3px">Ctrl+9</div>
<div class="t" style="left:437px;top:320px;font-size:12.1px;color:#000;-webkit-text-stroke:0.25px #000;letter-spacing:-0.168px"><span class=mi>Character</span></div>
<div class="t" style="right:1160px;top:320px;font-size:12.1px;color:#000;-webkit-text-stroke:0.25px #000;letter-spacing:0.3px">Ctrl+6</div>
<div class="t" style="left:437px;top:342px;font-size:12.1px;color:#000;-webkit-text-stroke:0.25px #000;letter-spacing:0.024px"><span class=mi>Content-Aware Fill</span></div>
<div class="a" style="left:405px;top:359px;width:22px;height:22px;background:#91c9f7;"></div>
<svg class="a" style="left:410px;top:365px;" width="12" height="10" viewBox="0 0 12 10"><path d="M1 5L4.3 8.3L11 1.5" fill="none" stroke="#1a2a3a" stroke-width="1.5"/></svg>
<div class="t" style="left:437px;top:364px;font-size:12.1px;color:#000;-webkit-text-stroke:0.25px #000;letter-spacing:-0.244px"><span class=mi>Effects &amp; Presets</span></div>
<div class="t" style="right:1160px;top:364px;font-size:12.1px;color:#000;-webkit-text-stroke:0.25px #000;letter-spacing:0.3px">Ctrl+5</div>
<div class="t" style="left:437px;top:386px;font-size:12.1px;color:#000;-webkit-text-stroke:0.25px #000;letter-spacing:-0.357px"><span class=mi>Essential Graphics</span></div>
<div class="a" style="left:405px;top:403px;width:22px;height:22px;background:#91c9f7;"></div>
<svg class="a" style="left:410px;top:409px;" width="12" height="10" viewBox="0 0 12 10"><path d="M1 5L4.3 8.3L11 1.5" fill="none" stroke="#1a2a3a" stroke-width="1.5"/></svg>
<div class="t" style="left:437px;top:408px;font-size:12.1px;color:#000;-webkit-text-stroke:0.25px #000;letter-spacing:0.328px"><span class=mi>Info</span></div>
<div class="t" style="right:1160px;top:408px;font-size:12.1px;color:#000;-webkit-text-stroke:0.25px #000;letter-spacing:0.3px">Ctrl+2</div>
<div class="t" style="left:437px;top:430px;font-size:12.1px;color:#000;-webkit-text-stroke:0.25px #000;letter-spacing:-0.307px"><span class=mi>Learn</span></div>
<div class="t" style="left:437px;top:452px;font-size:12.1px;color:#000;-webkit-text-stroke:0.25px #000;letter-spacing:-0.177px"><span class=mi>Libraries</span></div>
<div class="t" style="left:437px;top:474px;font-size:12.1px;color:#000;-webkit-text-stroke:0.25px #000;letter-spacing:-0.167px"><span class=mi>Lumetri Scopes</span></div>
<div class="t" style="left:437px;top:496px;font-size:12.1px;color:#000;-webkit-text-stroke:0.25px #000;letter-spacing:0.021px"><span class=mi>Mask Interpolation</span></div>
<div class="t" style="left:437px;top:518px;font-size:12.1px;color:#000;-webkit-text-stroke:0.25px #000;letter-spacing:-0.143px"><span class=mi>Media Browser</span></div>
<div class="t" style="left:437px;top:540px;font-size:12.1px;color:#000;-webkit-text-stroke:0.25px #000;letter-spacing:-0.005px"><span class=mi>Metadata</span></div>
<div class="t" style="left:437px;top:562px;font-size:12.1px;color:#000;-webkit-text-stroke:0.25px #000;letter-spacing:0.051px"><span class=mi>Motion Sketch</span></div>
<div class="t" style="left:437px;top:584px;font-size:12.1px;color:#000;-webkit-text-stroke:0.25px #000;letter-spacing:-0.016px"><span class=mi>Paint</span></div>
<div class="t" style="right:1160px;top:584px;font-size:12.1px;color:#000;-webkit-text-stroke:0.25px #000;letter-spacing:0.3px">Ctrl+8</div>
<div class="t" style="left:437px;top:606px;font-size:12.1px;color:#000;-webkit-text-stroke:0.25px #000;letter-spacing:-0.22px"><span class=mi>Paragraph</span></div>
<div class="t" style="right:1160px;top:606px;font-size:12.1px;color:#000;-webkit-text-stroke:0.25px #000;letter-spacing:0.3px">Ctrl+7</div>
<div class="a" style="left:405px;top:623px;width:22px;height:22px;background:#91c9f7;"></div>
<svg class="a" style="left:410px;top:629px;" width="12" height="10" viewBox="0 0 12 10"><path d="M1 5L4.3 8.3L11 1.5" fill="none" stroke="#1a2a3a" stroke-width="1.5"/></svg>
<div class="t" style="left:437px;top:628px;font-size:12.1px;color:#000;-webkit-text-stroke:0.25px #000;letter-spacing:-0.217px"><span class=mi>Preview</span></div>
<div class="t" style="right:1160px;top:628px;font-size:12.1px;color:#000;-webkit-text-stroke:0.25px #000;letter-spacing:0.3px">Ctrl+3</div>
<div class="t" style="left:437px;top:650px;font-size:12.1px;color:#000;-webkit-text-stroke:0.25px #000;letter-spacing:-0.351px"><span class=mi>Progress</span></div>
<div class="t" style="left:437px;top:672px;font-size:12.1px;color:#000;-webkit-text-stroke:0.25px #000;letter-spacing:0.045px"><span class=mi>Smoother</span></div>
<div class="a" style="left:405px;top:689px;width:22px;height:22px;background:#91c9f7;"></div>
<svg class="a" style="left:410px;top:695px;" width="12" height="10" viewBox="0 0 12 10"><path d="M1 5L4.3 8.3L11 1.5" fill="none" stroke="#1a2a3a" stroke-width="1.5"/></svg>
<div class="t" style="left:437px;top:694px;font-size:12.1px;color:#000;-webkit-text-stroke:0.25px #000;letter-spacing:-0.147px"><span class=mi>Tools</span></div>
<div class="t" style="right:1160px;top:694px;font-size:12.1px;color:#000;-webkit-text-stroke:0.25px #000;letter-spacing:0.3px">Ctrl+1</div>
<div class="t" style="left:437px;top:716px;font-size:12.1px;color:#000;-webkit-text-stroke:0.25px #000;letter-spacing:-0.392px"><span class=mi>Tracker</span></div>
<div class="t" style="left:437px;top:738px;font-size:12.1px;color:#000;-webkit-text-stroke:0.25px #000;letter-spacing:0.129px"><span class=mi>Wiggler</span></div>
<div class="a" style="left:432px;top:758px;width:345px;height:1px;background:#d5d5d5;"></div>
<div class="a" style="left:405px;top:762px;width:22px;height:22px;background:#91c9f7;"></div>
<svg class="a" style="left:410px;top:768px;" width="12" height="10" viewBox="0 0 12 10"><path d="M1 5L4.3 8.3L11 1.5" fill="none" stroke="#1a2a3a" stroke-width="1.5"/></svg>
<div class="t" style="left:437px;top:767px;font-size:12.1px;color:#000;-webkit-text-stroke:0.25px #000;letter-spacing:0.004px"><span class=mi>Composition: keyframes</span></div>
<div class="t" style="left:437px;top:789px;font-size:12.1px;color:#000;-webkit-text-stroke:0.25px #000;letter-spacing:-0.283px"><span class=mi>Effect Controls: Shape Layer 1</span></div>
<div class="t" style="left:437px;top:811px;font-size:12.1px;color:#000;-webkit-text-stroke:0.25px #000;letter-spacing:-0.048px"><span class=mi>Flowchart: (none)</span></div>
<div class="t" style="left:437px;top:833px;font-size:12.1px;color:#000;-webkit-text-stroke:0.25px #000;letter-spacing:-0.124px"><span class=mi>Footage: (none)</span></div>
<div class="t" style="left:437px;top:855px;font-size:12.1px;color:#000;-webkit-text-stroke:0.25px #000;letter-spacing:-0.218px"><span class=mi>Layer: (none)</span></div>
<div class="a" style="left:405px;top:872px;width:22px;height:22px;background:#91c9f7;"></div>
<svg class="a" style="left:410px;top:878px;" width="12" height="10" viewBox="0 0 12 10"><path d="M1 5L4.3 8.3L11 1.5" fill="none" stroke="#1a2a3a" stroke-width="1.5"/></svg>
<div class="t" style="left:437px;top:877px;font-size:12.1px;color:#000;-webkit-text-stroke:0.25px #000;letter-spacing:-0.006px"><span class=mi>Project</span></div>
<div class="t" style="right:1160px;top:877px;font-size:12.1px;color:#000;-webkit-text-stroke:0.25px #000;letter-spacing:0.3px">Ctrl+0</div>
<div class="t" style="left:437px;top:899px;font-size:12.1px;color:#000;-webkit-text-stroke:0.25px #000;letter-spacing:-0.279px"><span class=mi>Render Queue</span></div>
<div class="t" style="right:1160px;top:899px;font-size:12.1px;color:#000;-webkit-text-stroke:0.25px #000;letter-spacing:0.3px">Ctrl+Alt+0</div>
<div class="a" style="left:405px;top:916px;width:22px;height:22px;background:#91c9f7;"></div>
<svg class="a" style="left:410px;top:922px;" width="12" height="10" viewBox="0 0 12 10"><path d="M1 5L4.3 8.3L11 1.5" fill="none" stroke="#1a2a3a" stroke-width="1.5"/></svg>
<div class="t" style="left:437px;top:921px;font-size:12.1px;color:#000;-webkit-text-stroke:0.25px #000;letter-spacing:-0.114px"><span class=mi>Timeline: keyframes</span></div>
<div class="a" style="left:432px;top:941px;width:345px;height:1px;background:#d5d5d5;"></div>
<div class="t" style="left:437px;top:950px;font-size:12.1px;color:#000;-webkit-text-stroke:0.25px #000;letter-spacing:-0.246px"><span class=mi>Create Nulls From Paths.jsx</span></div>
<div class="t" style="left:437px;top:972px;font-size:12.1px;color:#000;-webkit-text-stroke:0.25px #000;letter-spacing:-0.381px"><span class=mi>FX Console.jsx</span></div>
<div class="t" style="left:437px;top:994px;font-size:12.1px;color:#000;-webkit-text-stroke:0.25px #000;letter-spacing:-0.1px"><span class=mi>GifGun.jsxbin</span></div>
<div class="t" style="left:437px;top:1016px;font-size:12.1px;color:#000;-webkit-text-stroke:0.25px #000;letter-spacing:0.109px"><span class=mi>Motion 2.jsxbin</span></div>
<div class="t" style="left:437px;top:1038px;font-size:12.1px;color:#000;-webkit-text-stroke:0.25px #000;letter-spacing:-0.184px"><span class=mi>RubberHose2.jsxbin</span></div>
<div class="t" style="left:437px;top:1060px;font-size:12.1px;color:#000;-webkit-text-stroke:0.25px #000;letter-spacing:-0.237px"><span class=mi>VR Comp Editor.jsx</span></div>
<svg class="a" style="left:486px;top:215px;" width="13" height="20" viewBox="0 0 13 20"><path d="M0.5 0.5V16.2L4.3 12.7L6.8 18.3L9 17.3L6.6 11.9H11.6Z" fill="#fff" stroke="#000" stroke-width="1" stroke-linejoin="miter"/></svg>
</body></html>
